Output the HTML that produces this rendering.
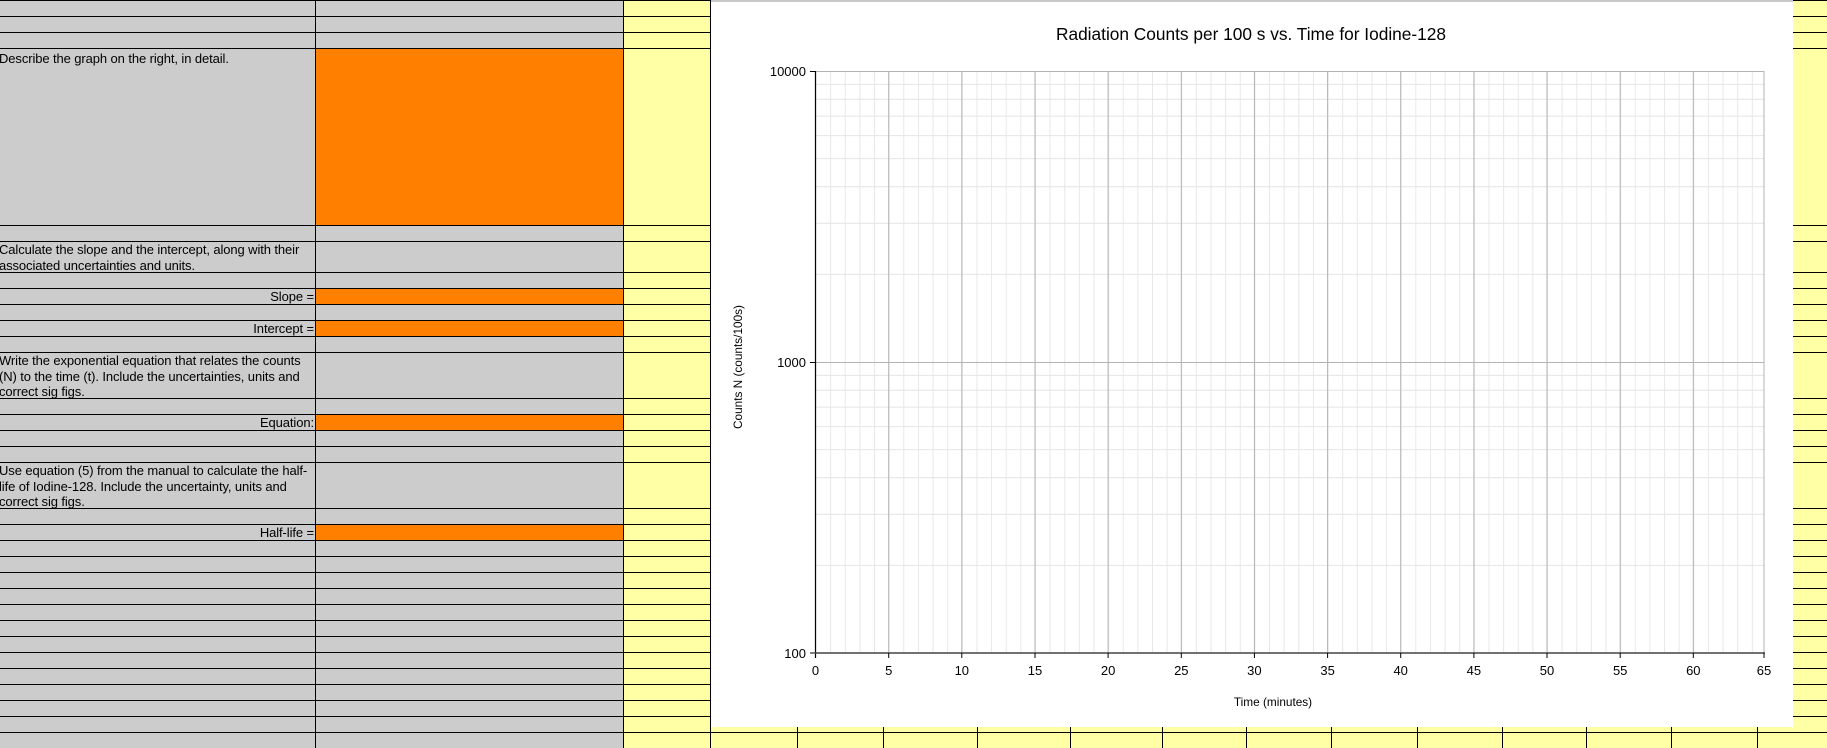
<!DOCTYPE html>
<html><head><meta charset="utf-8">
<style>
*{margin:0;padding:0;box-sizing:border-box}
body{width:1827px;height:748px;overflow:hidden;background:#ffffa6;position:relative;font-family:"Liberation Sans",Arial,sans-serif;font-size:13px;color:#000}
.row{position:absolute;left:0;width:1827px;border-top:1px solid #000}
.c1{position:absolute;left:0;width:316px;top:0;bottom:0;background:#ccc;border-right:1px solid #000;overflow:hidden;line-height:15.5px;letter-spacing:-0.1px}
.c2{position:absolute;left:316px;width:308px;top:0;bottom:0;background:#ccc;border-right:1px solid #000}
.o{background:#ff8000}
.c1 span{display:block;margin-left:-1px}
.r{text-align:right;padding-right:1px;line-height:15px}
.vl{position:absolute;left:710px;top:0;width:1px;height:748px;background:#000}
#chart{position:absolute;left:711px;top:0;width:1082px;height:727px;background:#fff;border-top:2px solid #c8c8c8}
.bv{position:absolute;top:727px;height:21px;width:1px;background:#000}
</style></head><body>

<div class="row" style="top:0;height:16px;border-top:1px solid #000"><div class="c1"></div><div class="c2"></div></div>
<div class="row" style="top:16px;height:16px"><div class="c1"></div><div class="c2"></div></div>
<div class="row" style="top:32px;height:16px"><div class="c1"></div><div class="c2"></div></div>
<div class="row" style="top:48px;height:177px"><div class="c1"><span style="padding-top:2px">Describe the graph on the right, in detail.</span></div><div class="c2 o"></div></div>
<div class="row" style="top:225px;height:16px"><div class="c1"></div><div class="c2"></div></div>
<div class="row" style="top:241px;height:31px"><div class="c1"><span>Calculate the slope and the intercept, along with their associated uncertainties and units.</span></div><div class="c2"></div></div>
<div class="row" style="top:272px;height:16px"><div class="c1"></div><div class="c2"></div></div>
<div class="row" style="top:288px;height:16px"><div class="c1 r">Slope =</div><div class="c2 o"></div></div>
<div class="row" style="top:304px;height:16px"><div class="c1"></div><div class="c2"></div></div>
<div class="row" style="top:320px;height:16px"><div class="c1 r">Intercept =</div><div class="c2 o"></div></div>
<div class="row" style="top:336px;height:16px"><div class="c1"></div><div class="c2"></div></div>
<div class="row" style="top:352px;height:46px"><div class="c1"><span>Write the exponential equation that relates the counts<br>(N) to the time (t). Include the uncertainties, units and<br>correct sig figs.</span></div><div class="c2"></div></div>
<div class="row" style="top:398px;height:16px"><div class="c1"></div><div class="c2"></div></div>
<div class="row" style="top:414px;height:16px"><div class="c1 r">Equation:</div><div class="c2 o"></div></div>
<div class="row" style="top:430px;height:16px"><div class="c1"></div><div class="c2"></div></div>
<div class="row" style="top:446px;height:16px"><div class="c1"></div><div class="c2"></div></div>
<div class="row" style="top:462px;height:46px"><div class="c1"><span>Use equation (5) from the manual to calculate the half-<br>life of Iodine-128. Include the uncertainty, units and<br>correct sig figs.</span></div><div class="c2"></div></div>
<div class="row" style="top:508px;height:16px"><div class="c1"></div><div class="c2"></div></div>
<div class="row" style="top:524px;height:16px"><div class="c1 r">Half-life =</div><div class="c2 o"></div></div>
<div class="row" style="top:540px;height:16px"><div class="c1"></div><div class="c2"></div></div>
<div class="row" style="top:556px;height:16px"><div class="c1"></div><div class="c2"></div></div>
<div class="row" style="top:572px;height:16px"><div class="c1"></div><div class="c2"></div></div>
<div class="row" style="top:588px;height:16px"><div class="c1"></div><div class="c2"></div></div>
<div class="row" style="top:604px;height:16px"><div class="c1"></div><div class="c2"></div></div>
<div class="row" style="top:620px;height:16px"><div class="c1"></div><div class="c2"></div></div>
<div class="row" style="top:636px;height:16px"><div class="c1"></div><div class="c2"></div></div>
<div class="row" style="top:652px;height:16px"><div class="c1"></div><div class="c2"></div></div>
<div class="row" style="top:668px;height:16px"><div class="c1"></div><div class="c2"></div></div>
<div class="row" style="top:684px;height:16px"><div class="c1"></div><div class="c2"></div></div>
<div class="row" style="top:700px;height:16px"><div class="c1"></div><div class="c2"></div></div>
<div class="row" style="top:716px;height:16px"><div class="c1"></div><div class="c2"></div></div>
<div class="row" style="top:732px;height:16px"><div class="c1"></div><div class="c2"></div></div>

<div class="vl"></div>
<div class="bv" style="left:797px"></div><div class="bv" style="left:883px"></div><div class="bv" style="left:977px"></div><div class="bv" style="left:1070px"></div><div class="bv" style="left:1162px"></div><div class="bv" style="left:1246px"></div><div class="bv" style="left:1331px"></div><div class="bv" style="left:1417px"></div><div class="bv" style="left:1502px"></div><div class="bv" style="left:1586px"></div><div class="bv" style="left:1671px"></div><div class="bv" style="left:1757px"></div>

<div id="chart">
<svg width="1082" height="727" viewBox="711 0 1082 727" xmlns="http://www.w3.org/2000/svg" style="position:absolute;left:0;top:-2px">
<defs>
<pattern id="vm" x="815.5" y="0" width="14.63" height="10" patternUnits="userSpaceOnUse"><rect x="0" y="0" width="1" height="10" fill="#e8e8e8"/></pattern>
</defs>
<rect x="815.5" y="71" width="948.5" height="582" fill="url(#vm)"/>
<g stroke="#e4e4e4" stroke-width="1">
<line x1="815" x2="1764" y1="84.4" y2="84.4"/><line x1="815" x2="1764" y1="99.2" y2="99.2"/><line x1="815" x2="1764" y1="116.1" y2="116.1"/><line x1="815" x2="1764" y1="135.6" y2="135.6"/><line x1="815" x2="1764" y1="158.6" y2="158.6"/><line x1="815" x2="1764" y1="186.8" y2="186.8"/><line x1="815" x2="1764" y1="223.2" y2="223.2"/><line x1="815" x2="1764" y1="274.4" y2="274.4"/>
<line x1="815" x2="1764" y1="375.4" y2="375.4"/><line x1="815" x2="1764" y1="390.2" y2="390.2"/><line x1="815" x2="1764" y1="407.1" y2="407.1"/><line x1="815" x2="1764" y1="426.6" y2="426.6"/><line x1="815" x2="1764" y1="449.6" y2="449.6"/><line x1="815" x2="1764" y1="477.8" y2="477.8"/><line x1="815" x2="1764" y1="514.2" y2="514.2"/><line x1="815" x2="1764" y1="565.4" y2="565.4"/>
</g>
<g stroke="#b3b3b3" stroke-width="1">
<line x1="815" x2="1764" y1="71.5" y2="71.5"/><line x1="815" x2="1764" y1="362.5" y2="362.5"/>
<line x1="888.7" x2="888.7" y1="71" y2="653"/><line x1="961.8" x2="961.8" y1="71" y2="653"/><line x1="1035" x2="1035" y1="71" y2="653"/><line x1="1108.1" x2="1108.1" y1="71" y2="653"/><line x1="1181.3" x2="1181.3" y1="71" y2="653"/><line x1="1254.4" x2="1254.4" y1="71" y2="653"/><line x1="1327.6" x2="1327.6" y1="71" y2="653"/><line x1="1400.7" x2="1400.7" y1="71" y2="653"/><line x1="1473.9" x2="1473.9" y1="71" y2="653"/><line x1="1547" x2="1547" y1="71" y2="653"/><line x1="1620.2" x2="1620.2" y1="71" y2="653"/><line x1="1693.3" x2="1693.3" y1="71" y2="653"/><line x1="1764" x2="1764" y1="71" y2="653"/>
</g>
<line x1="815.5" x2="815.5" y1="71" y2="658" stroke="#000" stroke-width="1.2"/>
<line x1="815" x2="1765" y1="653" y2="653" stroke="#444" stroke-width="1.5"/>
<g stroke="#000"><line x1="810" x2="815" y1="71.5" y2="71.5"/><line x1="810" x2="815" y1="362.5" y2="362.5"/><line x1="810" x2="815" y1="653" y2="653"/>
<line x1="888.7" x2="888.7" y1="653" y2="658"/><line x1="961.8" x2="961.8" y1="653" y2="658"/><line x1="1035" x2="1035" y1="653" y2="658"/><line x1="1108.1" x2="1108.1" y1="653" y2="658"/><line x1="1181.3" x2="1181.3" y1="653" y2="658"/><line x1="1254.4" x2="1254.4" y1="653" y2="658"/><line x1="1327.6" x2="1327.6" y1="653" y2="658"/><line x1="1400.7" x2="1400.7" y1="653" y2="658"/><line x1="1473.9" x2="1473.9" y1="653" y2="658"/><line x1="1547" x2="1547" y1="653" y2="658"/><line x1="1620.2" x2="1620.2" y1="653" y2="658"/><line x1="1693.3" x2="1693.3" y1="653" y2="658"/><line x1="1764" x2="1764" y1="653" y2="658"/></g>
<g font-family="Liberation Sans, Arial, sans-serif" font-size="13" fill="#000">
<text x="1251" y="40" font-size="17.3" text-anchor="middle">Radiation Counts per 100 s vs. Time for Iodine-128</text>
<text x="806" y="76" text-anchor="end">10000</text>
<text x="806" y="367" text-anchor="end">1000</text>
<text x="806" y="658" text-anchor="end">100</text>
<g text-anchor="middle"><text x="815.5" y="675">0</text><text x="888.7" y="675">5</text><text x="961.8" y="675">10</text><text x="1035" y="675">15</text><text x="1108.1" y="675">20</text><text x="1181.3" y="675">25</text><text x="1254.4" y="675">30</text><text x="1327.6" y="675">35</text><text x="1400.7" y="675">40</text><text x="1473.9" y="675">45</text><text x="1547" y="675">50</text><text x="1620.2" y="675">55</text><text x="1693.3" y="675">60</text><text x="1764" y="675">65</text></g>
<text x="1273" y="706" font-size="11.8" text-anchor="middle">Time (minutes)</text>
<text transform="translate(742,367) rotate(-90)" font-size="11.8" text-anchor="middle">Counts N (counts/100s)</text>
</g>
</svg>
</div>
</body></html>
